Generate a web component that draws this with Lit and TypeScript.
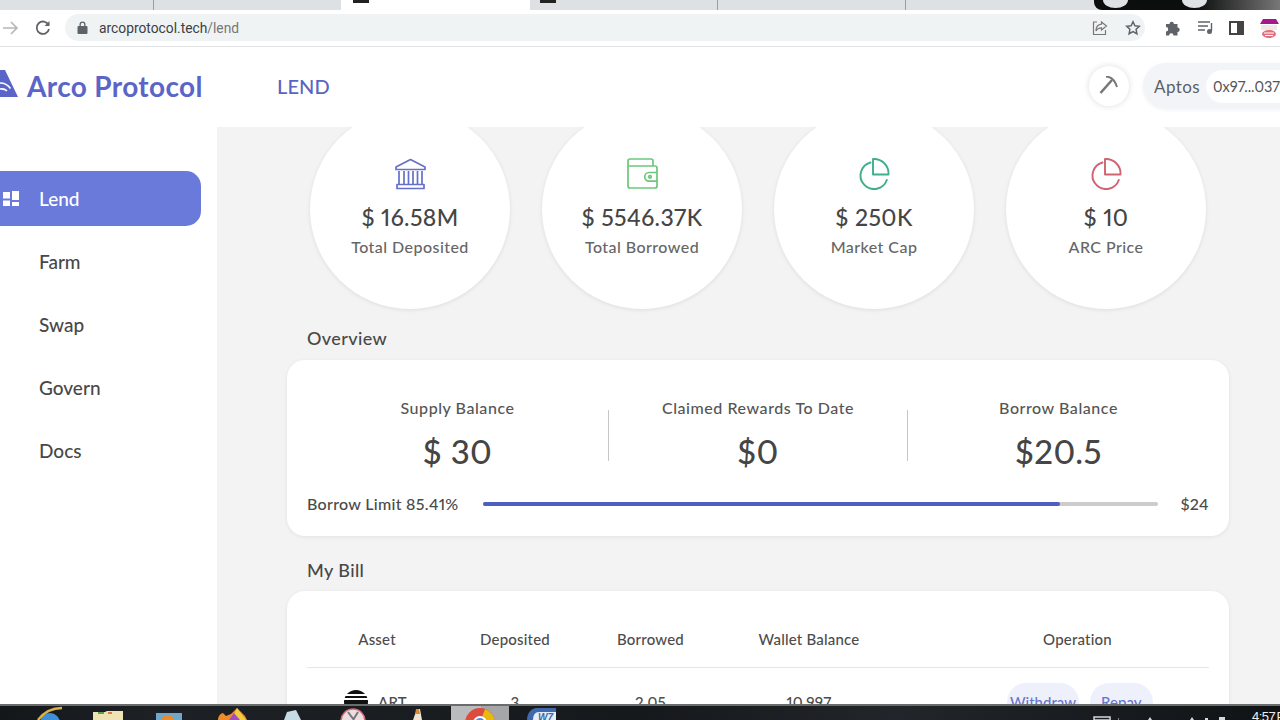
import { LitElement, html, css, svg } from "lit";
import { customElement } from "lit/decorators.js";

const bank = svg`<g fill="none" stroke="#6670c8" stroke-width="1.700" stroke-linejoin="round"><path d="M2 10 16.500 2.500 31 10v2.500H2z"/><path d="M3 27.500h27V31.500H3zM5 27V14M10 27V14M14.500 27V14M19 27V14M23.500 27V14M28 27V14"/></g>`;
const wallet = svg`<g fill="none" stroke="#6cc77a" stroke-width="1.700" stroke-linejoin="round"><path d="M27 9V4a2 2 0 0 0-2-2H4a2 2 0 0 0-2 2v25a2 2 0 0 0 2 2h25a2 2 0 0 0 2-2V11a2 2 0 0 0-2-2H2"/><path d="M31 15.500H23a4.300 4.300 0 0 0 0 8.600h8"/><circle cx="24" cy="19.800" r="1.300"/></g>`;
const pie = (c: string) => svg`<g fill="none" stroke=${c} stroke-width="1.900" stroke-linejoin="round" stroke-linecap="round"><path d="M12.500 5.500A13.500 13.500 0 1 0 28.800 23"/><path d="M15 2a14.500 14.500 0 0 1 15.500 15.500H15z"/></g>`;

const stats = [
  { icon: bank, value: "$ 16.58M", label: "Total Deposited" },
  { icon: wallet, value: "$ 5546.37K", label: "Total Borrowed" },
  { icon: pie("#3fae8c"), value: "$ 250K", label: "Market Cap" },
  { icon: pie("#cf6470"), value: "$ 10", label: "ARC Price" },
];

@customElement("app-root")
export class AppRoot extends LitElement {
  static styles = css`
    :host { display: flex; flex-direction: column; width: 1280px; height: 720px; overflow: hidden; background: #fff; font-family: "Lato", "Inter", sans-serif; font-variant-numeric: proportional-nums; font-feature-settings: "pnum"; color: #444; }
    .tabs { height: 10px; flex: none; background: #dde1e4; display: flex; position: relative; overflow: hidden; }
    .tab-l { width: 341px; }
    .tab-a { width: 189px; background: #fff; padding-left: 12px; box-sizing: border-box; }
    .fav { display: block; width: 16px; height: 3px; background: #222; }
    .tab-r { flex: 1; padding-left: 10px; }
    .sep { position: absolute; top: 0; width: 1px; height: 10px; background: #9a9da2; }
    .media { position: absolute; left: 1094px; top: 0; width: 186px; height: 10px; background: linear-gradient(90deg, #0c0d0d 55%, #777 100%); border-bottom-left-radius: 8px; display: flex; gap: 54px; padding-left: 9px; box-sizing: border-box; }
    .media i { display: block; width: 25px; height: 16px; margin-top: -8px; border-radius: 50%; background: #dfe2e5; }
    .toolbar { height: 37px; flex: none; box-sizing: border-box; border-bottom: 1px solid #dfe1e3; display: flex; align-items: center; background: #fff; padding-bottom: 1px; }
    .nav { width: 65px; display: flex; align-items: center; flex: none; gap: 16px; padding-left: 2px; box-sizing: border-box; }
    .omni { width: 1080px; height: 27px; flex: none; border-radius: 14px; background: #f0f3f4; display: flex; align-items: center; padding: 0 4px 0 12px; box-sizing: border-box; font: 13.800px "Roboto", sans-serif; color: #3c4043; }
    .omni span { color: #777; }
    .omni .lock { margin-right: 11px; }
    .omni .spacer { flex: 1; }
    .omni .star { margin-left: 17px; }
    .ext { display: flex; align-items: center; gap: 15px; padding-left: 20px; }
    .avatar { width: 22px; height: 22px; flex: none; margin-left: -1px; }
    .header { height: 80px; flex: none; display: flex; align-items: center; background: #fff; position: relative; overflow: hidden; padding-bottom: 3px; box-sizing: border-box; }
    .logo { display: flex; align-items: center; width: 277px; flex: none; box-sizing: border-box; gap: 3px; color: #5b65c7; font-size: 28px; font-weight: 700; letter-spacing: 0.35px; }
    .page { color: #5a64c2; font-size: 20px; font-weight: 500; letter-spacing: .1px; }
    .right { margin-left: auto; display: flex; align-items: center; margin-right: -41px; gap: 14px; margin-top: 1px; }
    .pick { width: 40px; height: 40px; border-radius: 50%; background: #fff; box-shadow: 0 0 6px rgba(0,0,0,.14); display: flex; align-items: center; justify-content: center; }
    .chain { display: flex; align-items: center; width: 178px; height: 46px; border-radius: 23px 0 0 23px; background: #f3f4f8; box-shadow: 0 1px 4px rgba(0,0,0,.05); box-sizing: border-box; padding: 0 0 0 11px; font-size: 17px; color: #5b5f66; letter-spacing: .4px; }
    .addr { margin-left: 6px; flex: 1; height: 33px; border-radius: 17px 0 0 17px; background: #fff; display: flex; align-items: center; padding-left: 7px; font-size: 14.500px; letter-spacing: 0; color: #555; white-space: nowrap; }
    .body { flex: 1; min-height: 0; display: flex; overflow: hidden; }
    .side { width: 217px; flex: none; background: #fff; box-sizing: border-box; padding-top: 44px; display: flex; flex-direction: column; gap: 8px; }
    .item { height: 55px; width: 201px; display: flex; align-items: center; padding-left: 39px; box-sizing: border-box; font-size: 19px; font-weight: 500; color: #484848; position: relative; }
    .item.on { background: #6a7adb; color: #fff; border-radius: 0 15px 15px 0; }
    .grid { position: absolute; left: 3px; top: 20px; }
    .main { flex: 1; background: #f3f3f3; padding: 0 51px 0 70px; min-width: 0; overflow: hidden; }
    .stats { display: flex; gap: 32px; margin: -18px 0 0 23px; }
    .circle { width: 200px; height: 200px; flex: none; border-radius: 50%; background: #fff; box-shadow: 0 1px 4px rgba(0,0,0,.09); display: flex; flex-direction: column; align-items: center; box-sizing: border-box; padding-top: 48px; }
    .circle svg { display: block; margin-bottom: 13px; }
    .val { font-size: 23px; line-height: 28px; color: #454545; font-weight: 500; letter-spacing: .4px; }
    .lab { font-size: 16px; line-height: 22px; margin-top: 5px; color: #666; letter-spacing: .45px; font-weight: 500; }
    h2 { margin: 17px 0 0 20px; font-size: 18px; line-height: 24px; font-weight: 500; color: #484848; letter-spacing: .4px; }
    .card { background: #fff; border-radius: 18px; box-shadow: 0 1px 4px rgba(0,0,0,.07); margin-top: 10px; }
    .over { height: 176px; box-sizing: border-box; padding: 37px 20px 0; }
    .trio { display: grid; grid-template-columns: 301px 1px 298px 1px 301px; align-items: start; }
    .cell { text-align: center; }
    .cell small { display: block; font-size: 16px; line-height: 22px; color: #555; letter-spacing: .55px; font-weight: 500; }
    .cell b { display: block; font-size: 33px; line-height: 40px; margin-top: 12px; font-weight: 500; color: #454545; letter-spacing: .4px; }
    .rule { height: 51px; background: #c6c6c6; margin-top: 13px; }
    .limit { display: flex; align-items: center; margin-top: 23px; font-size: 16px; color: #4a4a4a; letter-spacing: .3px; font-weight: 500; }
    .limit > span:first-child { width: 176px; flex: none; white-space: nowrap; }
    .bar { width: 675px; height: 4px; background: #ccc; border-radius: 2px; flex: none; }
    .fill { height: 100%; background: #4f5fbf; border-radius: 2px; }
    .max { margin-left: auto; }
    h2.bill { margin-top: 22px; }
    .bill-card { height: 200px; padding: 0 20px; box-sizing: border-box; margin-top: 9px; }
    .row { display: grid; grid-template-columns: 140px 136px 135px 182px 1fr; text-align: center; font-size: 15px; letter-spacing: .2px; color: #4c4c4c; font-weight: 500; }
    .head { height: 77px; align-items: center; border-bottom: 1px solid #e6e6e6; padding-top: 19px; box-sizing: border-box; }
    .head span:last-child { padding-left: 46px; }
    .cols { padding-top: 15px; align-items: center; }
    .asset { display: flex; align-items: center; justify-content: center; gap: 9px; margin-left: -4px; }
    .ops { display: flex; justify-content: flex-start; gap: 11px; padding-left: 107px; }
    .btn { padding: 0 3px; height: 38px; line-height: 38px; border-radius: 19px; background: #eef1fb; color: #6a74cf; white-space: nowrap; letter-spacing: 0; }
    .btn.repay { padding: 0 11px; }
    .taskbar { height: 16px; flex: none; box-sizing: border-box; border-top: 2px solid #6a6c6c; background: linear-gradient(90deg, #14171a, #1d2125 12%, #16191c 50%, #222529 70%, #101316); position: relative; overflow: hidden; }
    .dock { display: block; }
    .clock { position: absolute; left: 1252px; top: 3px; font: 13px "Liberation Sans", sans-serif; letter-spacing: -.5px; word-spacing: -2px; color: #eee; white-space: nowrap; }
    .w7 { font: italic 700 10px "Liberation Sans", sans-serif; fill: #3f68ad; }
  `;

  render() {
    return html`
      <div class="tabs">
        <div class="tab-l"></div>
        <div class="tab-a"><i class="fav"></i></div>
        <div class="tab-r"><i class="fav"></i></div>
        <i class="sep" style="left:153px"></i><i class="sep" style="left:717px"></i><i class="sep" style="left:905px"></i>
        <div class="media"><i></i><i></i></div>
      </div>
      <div class="toolbar">
        <div class="nav">
          <svg width="17" height="16" viewBox="0 0 17 16" fill="none" stroke="#b4b6b8" stroke-width="1.600"><path d="M1 8h14M9 2l6 6-6 6"/></svg>
          <svg width="16" height="16" viewBox="0 0 16 16" fill="none" stroke="#5f6368" stroke-width="1.800"><path d="M13.500 5A6.200 6.200 0 1 0 14 9"/><path d="M14.500 1v5h-5" fill="#5f6368" stroke="none"/></svg>
        </div>
        <div class="omni">
          <svg class="lock" width="11" height="13" viewBox="0 0 11 13"><path fill="#5f6368" d="M1.500 5H2.500V3.500a3 3 0 0 1 6 0V5H9.500a1 1 0 0 1 1 1v6a1 1 0 0 1-1 1h-8a1 1 0 0 1-1-1V6a1 1 0 0 1 1-1zM3.800 5h3.400V3.500a1.700 1.700 0 0 0-3.400 0z"/></svg>
          arcoprotocol.tech<span>/lend</span>
          <div class="spacer"></div>
          <svg width="16" height="16" viewBox="0 0 16 16" fill="none" stroke="#777" stroke-width="1.200"><path d="M5 2H1.500v12.500h12V10"/><path d="M9.500 2l5 4-5 4V7.800C7 7.800 5 9 4 11c0-4 2-6.500 5.500-6.800z"/></svg>
          <svg class="star" width="16" height="16" viewBox="0 0 16 16" fill="none" stroke="#5f6368" stroke-width="1.500"><path d="M8 1.800l1.900 4 4.400.5-3.200 3 .8 4.400L8 11.500l-3.900 2.200.8-4.400-3.200-3 4.400-.5z"/></svg>
        </div>
        <div class="ext">
          <svg width="17" height="17" viewBox="0 0 17 17"><path fill="#5f6368" d="M1 5h3.500a2.200 2.200 0 1 1 4.400 0h3.600v3.500a2.200 2.200 0 1 1 0 4.400V16.500H8.500a2.200 2.200 0 1 0-4.400 0H1v-4a2.200 2.200 0 1 0 0-4.400z"/></svg>
          <svg width="17" height="15" viewBox="0 0 17 15" fill="none" stroke="#5f6368" stroke-width="1.400"><path d="M1 2h12M1 6h10M1 10h7M14.500 3v8"/><circle cx="12.500" cy="11.500" r="1.800" fill="#5f6368"/></svg>
          <svg width="15" height="14" viewBox="0 0 15 14"><path fill="#444" fill-rule="evenodd" d="M0 0h15v14H0zM2 2v10h6V2z"/></svg>
          <svg class="avatar" viewBox="0 0 22 22"><path fill="#a5178a" d="M2 7l3-5h13l3 5z"/><rect x="3" y="8" width="16" height="5" fill="#efe6e8"/><ellipse cx="11" cy="17" rx="7" ry="4" fill="#e0707f"/><path stroke="#fff" d="M6 16h10M7 18.500h8"/></svg>
        </div>
      </div>
      <div class="header">
        <div class="logo">
          <svg width="24" height="32" viewBox="0 0 24 32"><path fill="#5b65c7" d="M0 0h5l13 27H0z"/><path fill="none" stroke="#fff" stroke-width="1.600" d="M0 13c4 0 8 2 10.500 5.500M0 19c3-.5 5 0 7 2"/></svg>
          <span>Arco Protocol</span>
        </div>
        <div class="page">LEND</div>
        <div class="right">
          <div class="pick">
            <svg width="20" height="20" viewBox="0 0 20 20" fill="none" stroke="#777"><path stroke-width="2.600" d="M1.500 17 13 4"/><path stroke-width="1.900" d="M7 .5c5 .3 9 3.500 11 10.500"/></svg>
          </div>
          <div class="chain"><span>Aptos</span><div class="addr">0x97...0370</div></div>
        </div>
      </div>
      <div class="body">
        <nav class="side">
          <div class="item on">
            <svg class="grid" width="16" height="16" viewBox="0 0 16 16"><path fill="#fff" d="M0 1h7v6.500H0zM9 0h7v9H9zM0 9.500h7V15H0zM9 11h7v4H9z"/></svg>
            Lend
          </div>
          <div class="item">Farm</div>
          <div class="item">Swap</div>
          <div class="item">Govern</div>
          <div class="item">Docs</div>
        </nav>
        <main class="main">
          <div class="stats">
            ${stats.map(s => html`<div class="circle">
              <svg width="33" height="33" viewBox="0 0 33 33">${s.icon}</svg>
              <div class="val">${s.value}</div>
              <div class="lab">${s.label}</div>
            </div>`)}
          </div>
          <h2>Overview</h2>
          <section class="card over">
            <div class="trio">
              <div class="cell"><small>Supply Balance</small><b>$ 30</b></div>
              <div class="rule"></div>
              <div class="cell"><small>Claimed Rewards To Date</small><b>$0</b></div>
              <div class="rule"></div>
              <div class="cell"><small>Borrow Balance</small><b>$20.5</b></div>
            </div>
            <div class="limit">
              <span>Borrow Limit 85.41%</span>
              <div class="bar"><div class="fill" style="width:85.41%"></div></div>
              <span class="max">$24</span>
            </div>
          </section>
          <h2 class="bill">My Bill</h2>
          <section class="card bill-card">
            <div class="row head"><span>Asset</span><span>Deposited</span><span>Borrowed</span><span>Wallet Balance</span><span>Operation</span></div>
            <div class="row cols">
              <span class="asset">
                <svg width="26" height="26" viewBox="0 0 26 26"><circle cx="13" cy="13" r="12" fill="#111"/><path stroke="#fff" stroke-width="2" d="M0 6h26M0 10h26"/></svg>
                ART
              </span>
              <span>3</span><span>2.05</span><span>10.997</span>
              <span class="ops"><span class="btn">Withdraw</span><span class="btn repay">Repay</span></span>
            </div>
          </section>
        </main>
      </div>
      <div class="taskbar">
        <svg class="dock" width="1280" height="14" viewBox="0 706 1280 14">
          <circle cx="50" cy="723" r="10" fill="#3f8fd8"/>
          <path d="M38 720C44 712 52 708 62 708" fill="none" stroke="#d9b04a" stroke-width="2.500"/>
          <path d="M93 712h12l2-1h16v9H93z" fill="#efe3b4"/><rect x="98" y="712" width="6" height="2" fill="#5f9e5a"/><rect x="108" y="712" width="4" height="2" fill="#d4803c"/>
          <rect x="156" y="713" width="26" height="7" fill="#6ea7c9"/><circle cx="168" cy="722" r="7" fill="#e98a2e"/>
          <path d="M218 720c0-4 3-7 5-7l3 3 5-2 6-6 8 8 2 4z" fill="#ee8a2a"/><path d="M231 720l6-12 9 12z" fill="#f0cd3c"/><path d="M229 720l5-7 6 7z" fill="#a04fc0"/>
          <path d="M284 720l3-8 9-2 5 10z" fill="#c7dbe6"/>
          <circle cx="353" cy="721" r="12" fill="#ecdde0" stroke="#d06a78" stroke-width="1.500"/><path d="M348 712l6 8M358 712l-5 8" stroke="#777" stroke-width="2"/>
          <path d="M417 709l3 0 2 11h-9z" fill="#f0e4d0"/><path d="M416 709h3l1 5h-5z" fill="#d98636"/>
          <rect x="451" y="706" width="58" height="14" fill="#a4a6a7"/>
          <path d="M451 706h30v14h-30z" fill="#c8c9ca" opacity=".6"/>
          <circle cx="480" cy="723" r="15" fill="#dd4b3e"/><path d="M480 723h15a15 15 0 0 1-3 9z" fill="#f4c20d"/><path d="M495 723a15 15 0 0 0-10-14l-5 14z" fill="#e8b90f"/>
          <circle cx="480" cy="723" r="7" fill="#fff"/><circle cx="480" cy="723" r="5" fill="#4a8af4"/>
          <path d="M527 720c0-7 4-12 10-12h19v12z" fill="#3f68ad"/><path d="M533 720c0-5 2-8 6-8h17v8z" fill="#e6edf6"/>
          <text class="w7" x="538" y="721">W7</text>
          <rect x="1094" y="717" width="16" height="3" fill="none" stroke="#d5d8da" stroke-width="1.500"/>
          <rect x="1118" y="718" width="1" height="2" fill="#888"/>
          <path d="M1148 720l2-3 2 3zM1190 720l2-3 2 3z" fill="#d5d8da"/>
          <rect x="1205" y="718" width="3" height="2" fill="#d5d8da"/><rect x="1219" y="717" width="6" height="3" fill="#d5d8da"/>
        </svg>
        <div class="clock">4:57 PM</div>
      </div>
    `;
  }
}
